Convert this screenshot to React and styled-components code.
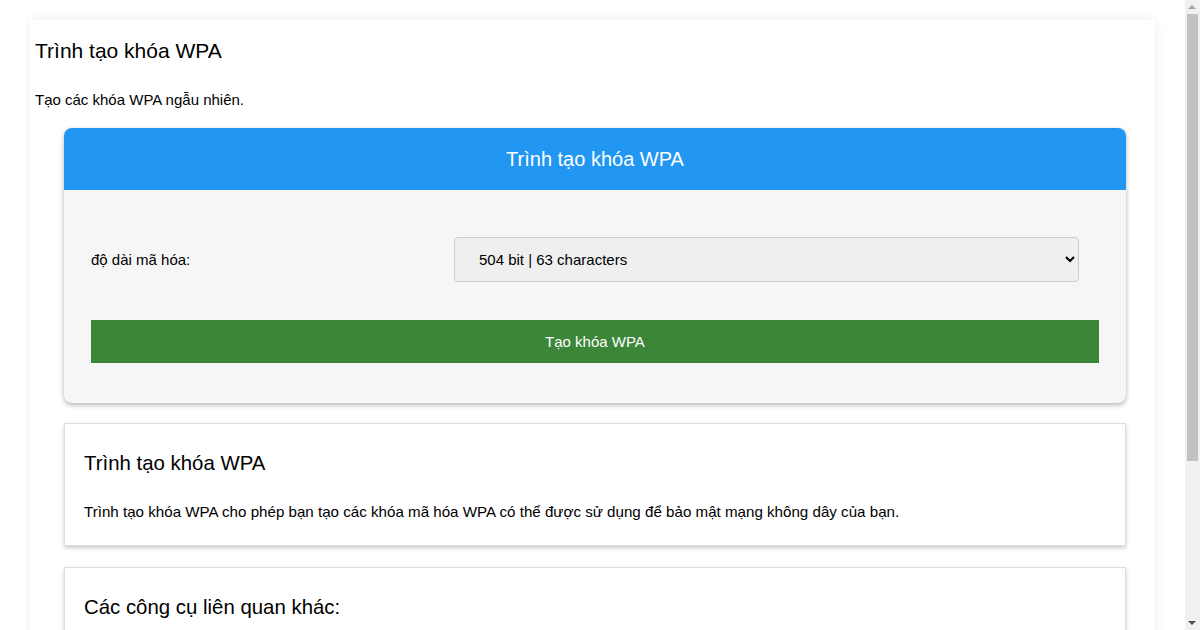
import React from 'react'
import styled, { createGlobalStyle } from 'styled-components'

const GlobalStyle = createGlobalStyle`
body {
    margin: 0;
    background: #fff;
    font-family: "Liberation Sans", Arial, sans-serif;
    color: #000;
}
`;

// the browser scrollbar seen in the screenshot, drawn over the right edge
const ScrollTrack = styled.div`
position: fixed;
top: 0;
right: 0;
width: 15px;
height: 100vh;
background: #f1f1f1;
z-index: 10;
`;

const ScrollThumb = styled.div`
position: absolute;
top: 14px;
left: 2px;
width: 11px;
height: 447px;
background: #c1c1c1;
`;

const ScrollArrow = styled.div`
position: absolute;
left: 3px;
width: 0;
height: 0;
border-left: 4.5px solid transparent;
border-right: 4.5px solid transparent;
${p => p.$down
    ? 'bottom: 5px; border-top: 4.5px solid #505050;'
    : 'top: 5px; border-bottom: 4.5px solid #a3a3a3;'}
`;

const Page = styled.div`
width: 1125px;
margin: 20px 0 20px 30px;
padding: 1px 5px 20px;
box-sizing: border-box;
background: #fff;
box-shadow: 0 0 10px rgba(0,0,0,0.08);
`;

const Title = styled.h1`
font-size: 21px;
font-weight: normal;
margin: 18px 0 28px;
`;

const Lead = styled.p`
font-size: 15px;
margin: 0 0 20px;
`;

const Section = styled.div`
width: 1062px;
margin: 0 0 21px 29px;
`;

const ToolCard = styled(Section)`
margin-bottom: 20px;
background: #f6f6f6;
border-radius: 8px;
overflow: hidden;
box-shadow: 0 2px 5px rgba(0,0,0,0.3);
`;

const ToolHeader = styled.div`
background: #2196f3;
color: #fff;
height: 62px;
display: flex;
align-items: center;
justify-content: center;
font-size: 20px;
`;

const ToolBody = styled.div`
padding: 47px 27px 40px;
`;

const Row = styled.div`
display: flex;
align-items: center;
margin-bottom: 38px;
`;

const Label = styled.label`
width: 363px;
font-size: 15px;
`;

const Select = styled.select`
width: 625px;
height: 45px;
padding: 0 20px;
font-family: inherit;
font-size: 15px;
color: #000;
background: #efefef;
border: 1px solid #ccc;
border-radius: 4px;
`;

const Button = styled.button`
display: block;
width: 100%;
height: 43px;
border: none;
background: #3b8639;
color: #fff;
font-family: inherit;
font-size: 15px;
cursor: pointer;
`;

const InfoCard = styled(Section)`
background: #fff;
border: 1px solid #ddd;
box-sizing: border-box;
padding: 20px 19px;
box-shadow: 0 2px 4px rgba(0,0,0,0.2);
`;

const InfoTitle = styled.h2`
font-size: 20.4px;
font-weight: normal;
margin: 8px 0 28px;
`;

const InfoText = styled.p`
font-size: 15.15px;
margin: 0 0 5px;
`;

const LinkList = styled.ul`
margin: 0 0 5px;
padding-left: 20px;
font-size: 15px;
line-height: 30px;
a { color: #1a6fc9; text-decoration: none; }
`;

const related = [
    'Trình tạo mật khẩu',
    'Trình tạo chuỗi ngẫu nhiên',
    'Trình tạo UUID',
    'Trình tạo mã PIN',
    'Trình tạo mật khẩu WiFi',
];

export default function App() {
    return (
        <>
            <GlobalStyle />
            <ScrollTrack>
                <ScrollArrow />
                <ScrollThumb />
                <ScrollArrow $down />
            </ScrollTrack>
            <Page>
                <Title>Trình tạo khóa WPA</Title>
                <Lead>Tạo các khóa WPA ngẫu nhiên.</Lead>

                <ToolCard>
                    <ToolHeader>Trình tạo khóa WPA</ToolHeader>
                    <ToolBody>
                        <Row>
                            <Label htmlFor="len">độ dài mã hóa:</Label>
                            <Select id="len" defaultValue="504">
                                <option value="64">64 bit | 8 characters</option>
                                <option value="160">160 bit | 20 characters</option>
                                <option value="504">504 bit | 63 characters</option>
                            </Select>
                        </Row>
                        <Button>Tạo khóa WPA</Button>
                    </ToolBody>
                </ToolCard>

                <InfoCard>
                    <InfoTitle>Trình tạo khóa WPA</InfoTitle>
                    <InfoText>Trình tạo khóa WPA cho phép bạn tạo các khóa mã hóa WPA có thể được sử dụng để bảo mật mạng không dây của bạn.</InfoText>
                </InfoCard>

                <InfoCard>
                    <InfoTitle>Các công cụ liên quan khác:</InfoTitle>
                    <LinkList>
                        {related.map(r => (
                            <li key={r}><a href="#">{r}</a></li>
                        ))}
                    </LinkList>
                </InfoCard>
            </Page>
        </>
    )
}
